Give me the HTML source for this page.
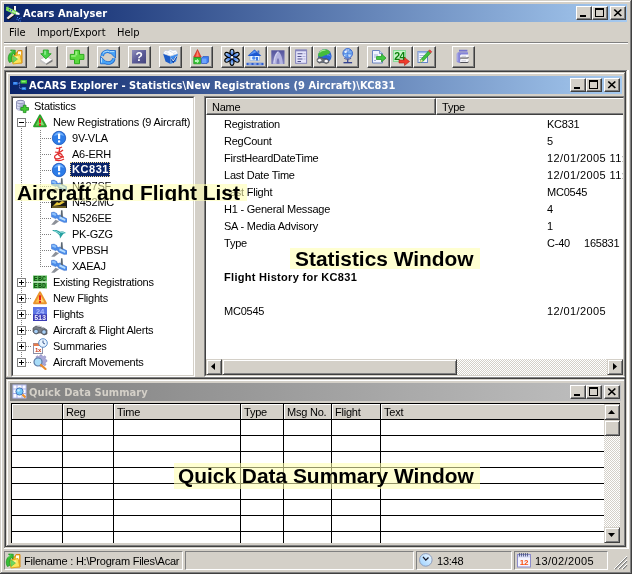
<!DOCTYPE html>
<html lang="en"><head><meta charset="utf-8"><title>Acars Analyser</title>
<style>
*{box-sizing:border-box;margin:0;padding:0}
html,body{width:632px;height:574px;overflow:hidden;background:#d4d0c8}
body{position:relative;font:11px "Liberation Sans",sans-serif;color:#000;letter-spacing:-0.23px}
#root{position:absolute;left:0;top:0;width:632px;height:574px;will-change:transform}
.a{position:absolute}
.ln{position:absolute;overflow:hidden}
.tb{position:absolute;height:18px;color:#fff;font:bold 11px "DejaVu Sans Condensed","DejaVu Sans","Liberation Sans",sans-serif;letter-spacing:.085px;line-height:18px;white-space:nowrap;overflow:hidden}
.tb.act{background:linear-gradient(90deg,#0a246a 0%,#a6caf0 100%)}
.tb.ina{background:linear-gradient(90deg,#808080 0%,#c0c0c0 100%);color:#d4d0c8}
.cb{position:absolute;width:16px;height:14px;background:#d4d0c8;border:1px solid;border-color:#fff #404040 #404040 #fff;box-shadow:inset -1px -1px 0 #808080}
.cb svg{position:absolute;left:0;top:0}
.menu{position:absolute;top:24px;height:18px;font:11px/18px "DejaVu Sans Condensed","DejaVu Sans","Liberation Sans",sans-serif;letter-spacing:0;white-space:nowrap}
.btn{position:absolute;top:46px;width:23px;height:22px;background:#d4d0c8;border:1px solid;border-color:#fff #404040 #404040 #fff;box-shadow:inset -1px -1px 0 #808080}
.btn svg{position:absolute;left:0;top:0}
.sunk{position:absolute;border:1px solid;border-color:#808080 #fff #fff #808080}
.sunk>.in{position:absolute;left:0;top:0;right:0;bottom:0;border:1px solid;border-color:#404040 #d4d0c8 #d4d0c8 #404040;background:#fff;overflow:hidden}
.tr{position:absolute;height:16px;line-height:16px;white-space:nowrap}
.lr{position:absolute;height:17px;line-height:17px;white-space:nowrap}
.dotv{position:absolute;width:1px;background-image:linear-gradient(#808080 50%,transparent 50%);background-size:1px 2px}
.doth{position:absolute;height:1px;background-image:linear-gradient(90deg,#808080 50%,transparent 50%);background-size:2px 1px}
.pm{position:absolute;width:9px;height:9px;border:1px solid #808080;background:#fff}
.pm:before{content:"";position:absolute;left:1px;top:3px;width:5px;height:1px;background:#000}
.pm.plus:after{content:"";position:absolute;left:3px;top:1px;width:1px;height:5px;background:#000}
.lab{position:absolute;font:bold 20.9px "Liberation Sans",sans-serif;letter-spacing:0;white-space:nowrap;overflow:hidden;background:rgba(255,255,175,0.58);color:#000}
.hd{position:absolute;background:#d4d0c8;border:1px solid;border-color:#fff #404040 #404040 #fff;box-shadow:inset -1px -1px 0 #808080;white-space:nowrap;overflow:hidden}
.sp{position:absolute;top:551px;height:19px;border:1px solid;border-color:#808080 #fff #fff #808080;line-height:17px;white-space:nowrap;overflow:hidden}
.gh{position:absolute;top:404px;height:15px;background:#d4d0c8;border-left:1px solid #fff;border-top:1px solid #fff;line-height:14px;white-space:nowrap;overflow:hidden}
.sbtn{position:absolute;background:#d4d0c8;border:1px solid;border-color:#d4d0c8 #404040 #404040 #d4d0c8;box-shadow:inset 1px 1px 0 #fff,inset -1px -1px 0 #808080}
.chk{background-image:repeating-conic-gradient(#fff 0% 25%,#d4d0c8 0% 50%);background-size:2px 2px}
</style></head>
<body><div id="root">
<div class="ln" style="left:1px;top:1px;width:630px;height:1px;background:#fff"></div>
<div class="ln" style="left:1px;top:1px;width:1px;height:572px;background:#fff"></div>
<div class="ln" style="left:630px;top:1px;width:1px;height:572px;background:#808080"></div>
<div class="ln" style="left:1px;top:572px;width:630px;height:1px;background:#808080"></div>
<div class="ln" style="left:631px;top:0px;width:1px;height:574px;background:#404040"></div>
<div class="ln" style="left:0px;top:573px;width:632px;height:1px;background:#404040"></div>
<div class="tb act" style="left:4px;top:4px;width:623px"><svg class="a" style="left:2px;top:2px" width="16" height="16" viewBox="0 0 16 16"><path d="M6 7l2.300 1.700-6 4.800-2-1.200z" fill="#101010" transform="translate(.6 .8)"/><path d="M6 7l2.300 1.700-6 4.500-1.800-1.200z" fill="#f4e4e0"/><path d="M7.800 0h2.200v5l-2.200-.8z" fill="#f8f8f8"/><path d="M7 0.500l.8-.5v4l-.8-.3z" fill="#101010"/><path d="M0 2.500l2-1.200 9.500 4.500.8 2.200-3 .5-9.300-4z" fill="#78e050"/><path d="M4 3.500l6 2.800-.5 1.200-6-2.800z" fill="#b8f0b0"/><circle cx="3.500" cy="3.700" r=".7" fill="#2040c0"/><circle cx="5.500" cy="4.700" r=".7" fill="#2040c0"/><path d="M10 6l3.500 1v2l-3.500-.5z" fill="#fff"/><path d="M0 1l1.500 1M2 0.500l-.5 1.500" stroke="#78e050" stroke-width="1"/><path d="M11 11h1v1h-1zM13 12h1v1h-1zM14.500 11.500h1v1h-1zM12 13.500h1v1h-1zM13.800 14.500h1v1h-1zM10.500 12.800h1v1h-1z" fill="#4a8cff"/></svg><span class="a" style="left:19px;top:1px">Acars Analyser</span></div>
<div class="cb" style="left:576px;top:6px"><svg width="14" height="12" viewBox="0 0 14 12"><rect x="3" y="8" width="6" height="2" fill="#000"/></svg></div>
<div class="cb" style="left:592px;top:6px"><svg width="14" height="12" viewBox="0 0 14 12"><rect x="2" y="1" width="8" height="8" fill="none" stroke="#000" stroke-width="1" transform="translate(.5 .5)"/><rect x="2" y="1" width="9" height="2" fill="#000"/></svg></div>
<div class="cb" style="left:610px;top:6px"><svg width="14" height="12" viewBox="0 0 14 12"><path d="M3.300 2 L10.300 8.500 M10.300 2 L3.300 8.500" stroke="#000" stroke-width="1.700" fill="none" transform="translate(0 .5)"/></svg></div>
<div class="menu" style="left:9px">File</div>
<div class="menu" style="left:37px">Import/Export</div>
<div class="menu" style="left:117px">Help</div>
<div class="ln" style="left:4px;top:42px;width:624px;height:1px;background:#808080"></div>
<div class="ln" style="left:4px;top:43px;width:624px;height:1px;background:#fff"></div>
<div class="btn" style="left:4px"><svg width="21" height="20" viewBox="0 0 21 20" ><path d="M9.500 6h2.500l1-2.500h4v12.500h-7.500z" fill="#f4c030" stroke="#d88810" stroke-width="1"/><path d="M13 4.500h3v6.500h-3z" fill="#fffdf0"/><path d="M6.500 9.500l8.500-2 1.800 8.300-8.800 1.200z" fill="#fbe45c" stroke="#e0a018" stroke-width=".9"/><path d="M8 10.500l5-1.200.5 2.500-4.500 1z" fill="#fff8b0" opacity=".8"/><path d="M4.500 15.500c-2.500-4-1-8.500 2.200-11l-1.200-1.500 4.800.3-.3 4.700-1.300-1.500c-2.200 1.800-3 4.800-1.800 7.800z" fill="#38c038" stroke="#189018" stroke-width=".7"/><path d="M5 6.500c.5-1 1.500-2 2.500-2.500" stroke="#a0f0a0" stroke-width=".8" fill="none"/><path d="M7.500 8.500l5 3.500-4.500 3.500z" fill="#70d860" stroke="#38b038" stroke-width=".5"/></svg></div>
<div class="btn" style="left:35px"><svg width="21" height="20" viewBox="0 0 21 20" ><path d="M4 12.500l6-3 6.500 3-6.300 4.300z" fill="#fff" stroke="#b8b8b8" stroke-width=".6"/><path d="M4 12.500v2l6.200 3.500v-1.200z" fill="#c4c4c4"/><path d="M16.500 12.500v2l-6.300 3.500v-1.200z" fill="#787878"/><path d="M7.300 3h5v3.700h2.900l-5.400 5.200-5-5.200h2.500z" fill="#48d048" stroke="#1ca01c" stroke-width=".8"/><path d="M8.300 3.800h1.500v4h-1.500z" fill="#98f098"/></svg></div>
<div class="btn" style="left:66px"><svg width="21" height="20" viewBox="0 0 21 20" ><path d="M7.500 3.300h5v4.100h4.400v5h-4.400v4.300h-5v-4.300h-4.200v-5h4.200z" fill="#5cd840" stroke="#2cac1c" stroke-width="1"/><path d="M8.300 4.200h2v4h-2zM4.200 8.300h4.500v1.500h-4.500z" fill="#98f080"/></svg></div>
<div class="btn" style="left:97px"><svg width="21" height="20" viewBox="0 0 21 20" ><g fill="none" stroke="#1c64c8" stroke-width="3.400"><path d="M4.200 9c.3-4 5-6.200 9-3.500"/><path d="M15.800 11.300c-.3 4-5 6.200-9 3.500"/></g><path d="M10 3.500h7.500v7.500z" fill="#48a4f8" stroke="#1c64c8" stroke-width=".8"/><path d="M10 16.800h-7.500v-7.500z" fill="#48a4f8" stroke="#1c64c8" stroke-width=".8"/><g fill="none" stroke="#48a4f8" stroke-width="2.000"><path d="M4.200 9c.3-4 5-6.200 9-3.500"/><path d="M15.800 11.300c-.3 4-5 6.200-9 3.500"/></g><path d="M5 6.300c1.500-2 4-2.600 6.500-1.600M12 4.600h4.300" stroke="#c0e8ff" stroke-width=".9" fill="none"/><path d="M3.500 11v4.500" stroke="#c0e8ff" stroke-width=".9" fill="none"/></svg></div>
<div class="btn" style="left:128px"><svg width="21" height="20" viewBox="0 0 21 20" ><defs><linearGradient id="hg" x1="0" y1="0" x2="1" y2="1"><stop offset="0" stop-color="#9090bc"/><stop offset=".5" stop-color="#5c5c98"/><stop offset="1" stop-color="#44447c"/></linearGradient></defs><rect x="3" y="3" width="14" height="13.500" fill="url(#hg)"/><text x="10" y="14.200" font-family="Liberation Sans,sans-serif" font-weight="bold" font-size="12" text-anchor="middle" fill="#fff">?</text></svg></div>
<div class="btn" style="left:159px"><svg width="21" height="20" viewBox="0 0 21 20" ><path d="M3 6.500l7.500 3v7.500l-5-2.500z" fill="#1c5cc8"/><path d="M18 6.500l-7.500 3v7.500l5.500-2.500z" fill="#3c8cf0"/><path d="M3 6.500l2-3 3 .5 2-1.500 3 1 3-.5 2 3.500-7.500 2.500z" fill="#fff" stroke="#b8c8e0" stroke-width=".6"/><path d="M5.500 5.500l3 1M9.500 4l3 1.500M13 6.500l2.500-1" stroke="#c8d4e8" stroke-width=".8"/><path d="M11.500 12l1.800 2.500 3-5" stroke="#103c98" stroke-width="1.800" fill="none"/><path d="M11.500 11.500l1.800 2.500 3-5" stroke="#e8f4ff" stroke-width=".9" fill="none"/></svg></div>
<div class="btn" style="left:190px"><svg width="21" height="20" viewBox="0 0 21 20" ><path d="M6.500 2.500l3.700 7.500c-2 1.200-5.500 1.200-7.500 0z" fill="#f04030" stroke="#b01c10" stroke-width=".5"/><path d="M6.500 3.500l1.500 6h-3z" fill="#ff9c80" opacity=".7"/><path d="M2.700 10.500h6.800v6.300h-6.800z" fill="#30c030" stroke="#189018" stroke-width=".6"/><path d="M4 14l2.500-2.500v1.500h2v2h-2v1.500z" fill="#d0ffd0" opacity=".85" transform="rotate(180 6.200 14)"/><path d="M10.500 11l1.500-1.500h5.500v5.500l-1.500 1.500h-5.500z" fill="#3c7cf0" stroke="#1c4cb8" stroke-width=".6"/><path d="M11 11.500h4.500v4.500h-4.500z" fill="#6ca4ff"/></svg></div>
<div class="btn" style="left:221px"><svg width="21" height="20" viewBox="0 0 21 20" ><defs><linearGradient id="pg" x1="0" y1="0" x2="0" y2="1"><stop offset="0" stop-color="#b8dcff"/><stop offset="1" stop-color="#2060e0"/></linearGradient></defs><g stroke="#000" stroke-width="1.100" fill="url(#pg)"><ellipse cx="10" cy="5.800" rx="2" ry="3.600"/><ellipse cx="10" cy="14.800" rx="2" ry="3.600" transform="rotate(180 10 14.800)"/><ellipse cx="10" cy="5.800" rx="2" ry="3.600" transform="rotate(60 10 10.300)"/><ellipse cx="10" cy="5.800" rx="2" ry="3.600" transform="rotate(120 10 10.300)"/><ellipse cx="10" cy="5.800" rx="2" ry="3.600" transform="rotate(240 10 10.300)"/><ellipse cx="10" cy="5.800" rx="2" ry="3.600" transform="rotate(300 10 10.300)"/></g><circle cx="10" cy="10.300" r="1.300" fill="#fff"/></svg></div>
<div class="btn" style="left:244px"><svg width="21" height="20" viewBox="0 0 21 20" ><path d="M5 8.500h9.500v5h-9.500z" fill="#e8f4ff" stroke="#8cb0e8" stroke-width=".6"/><path d="M2.700 8.800l6.800-6.300 6.800 6.300-1.300.3h-11z" fill="#1c58d0"/><path d="M4.500 8l5-4.500 2 1.800z" fill="#5c98f8"/><path d="M12.500 3.500h1.800v3l-1.800-1.500z" fill="#3c6cc8"/><circle cx="8.800" cy="11" r="1.800" fill="#4c8cf0"/><rect x="11" y="10" width="2" height="3.500" fill="#3c78e0"/><rect x="1.500" y="15.800" width="17" height="2.400" fill="#2c5cd0"/><path d="M3.500 17h3M8.500 17h3M13.500 17h3" stroke="#e8f0ff" stroke-width=".9"/></svg></div>
<div class="btn" style="left:267px"><svg width="21" height="20" viewBox="0 0 21 20" ><defs><linearGradient id="ag" x1="0" y1="0" x2="0" y2="1"><stop offset="0" stop-color="#54549c"/><stop offset="1" stop-color="#8484c0"/></linearGradient></defs><rect x="3.300" y="3.300" width="13.200" height="13.700" fill="url(#ag)"/><path d="M5 17c.5-6 2-11 5-13 3 2 4.500 7 5 13h-3.500c0-3-.5-5-1.500-6-1 1-1.500 3-1.500 6z" fill="#b4b4e0"/><path d="M6 16c.5-5 1.800-9 4-11" stroke="#d8d8f4" stroke-width="1" fill="none"/></svg></div>
<div class="btn" style="left:290px"><svg width="21" height="20" viewBox="0 0 21 20" ><rect x="4.600" y="3" width="11" height="13.300" fill="#e4e4fa" stroke="#8484bc" stroke-width="1"/><rect x="4.600" y="2.700" width="11" height="1.600" fill="#8484bc"/><path d="M6.500 6.700h5M6.500 9.500h4M6.500 12h5M6.500 14.500h3.500" stroke="#50508c" stroke-width="1.100"/><path d="M12.500 6.700h2M11.500 9.500h3M12.500 12h2" stroke="#b0b0d8" stroke-width="1"/></svg></div>
<div class="btn" style="left:313px"><svg width="21" height="20" viewBox="0 0 21 20" ><circle cx="10.800" cy="9" r="6.800" fill="#2c64d4"/><path d="M4.100 9c0-4 3-6.800 6.700-6.800 2.500 0 4.300 1.200 5.500 3-1 2.200-3 2.500-5 3-2.500.6-3.500 2.800-7.200 .8z" fill="#44bc3c"/><path d="M5.500 5.500c1.800-2 4-2.600 6-2.200" stroke="#a8ec98" stroke-width="1.100" fill="none"/><path d="M13 8c1.500-.5 3 .2 4 1.500" stroke="#6c9cf0" stroke-width="1" fill="none"/><path d="M3 12.200l2.200-2 2.800.6 1.500 1 2.800-.4 2.500 1.800v2.300l-2.500 1.200-2.800-1.300h-1.500l-2.800.8-2.200-1.800z" fill="#70747c" stroke="#3c4048" stroke-width=".5"/><ellipse cx="5.600" cy="13.300" rx="2.200" ry="1.700" fill="#fcfcff" stroke="#3c4048" stroke-width=".5"/><ellipse cx="12.200" cy="14.100" rx="2.200" ry="1.700" fill="#fcfcff" stroke="#3c4048" stroke-width=".5"/></svg></div>
<div class="btn" style="left:336px"><svg width="21" height="20" viewBox="0 0 21 20" ><circle cx="10.700" cy="6.400" r="4.800" fill="#78b0f4" stroke="#3c68d0" stroke-width="1"/><path d="M7.500 4.200c1-1.500 3-2 4.500-1.500 0 1.500-1.500 2-2.500 2.500-.5 1.500-2 1-2-1zM11 8c1-.5 2.500 0 3 1-1 1.500-2.500 1.500-3-1zM7 8l1.500.5-.5 1.500z" fill="#f0f8ff"/><path d="M6 6.400h9.500M10.700 1.600v9.600M7.300 3.200c2 1 5 1 6.800 0M7.300 9.600c2-1 5-1 6.800 0" stroke="#3c68d0" stroke-width=".45" fill="none"/><path d="M7.200 11.300c2 1.300 5 1.300 7 0" stroke="#3c4c9c" stroke-width=".9" fill="none"/><path d="M10.700 12.200v3" stroke="#3c4c9c" stroke-width="1.300"/><path d="M6.500 15.700h8.600" stroke="#2c3c8c" stroke-width="1.300"/></svg></div>
<div class="btn" style="left:367px"><svg width="21" height="20" viewBox="0 0 21 20" ><path d="M4.500 3.500h7l3 3v9.500h-10z" fill="#f0f4ff" stroke="#6c84c0"/><path d="M11.500 3.500v3h3" fill="#d0dcf4" stroke="#6c84c0" stroke-width=".8"/><path d="M6 8h4M6 10h2M6 13.500h2" stroke="#a0b0d8"/><path d="M8.500 9.500h5v-2.500l4.500 4-4.500 4v-2.500h-5z" fill="#40c840" stroke="#1c901c" stroke-width=".7"/></svg></div>
<div class="btn" style="left:390px"><svg width="21" height="20" viewBox="0 0 21 20" ><rect x="2.500" y="3.500" width="12" height="11" fill="#c8f4c8" stroke="#88dc98" stroke-width="1"/><text x="8.500" y="13" font-family="Liberation Sans,sans-serif" font-weight="bold" font-size="10.500" text-anchor="middle" fill="#0c800c" letter-spacing="-.5">24</text><path d="M8 13h5.500v-2.500l5 4-5 4v-2.500h-5.500z" fill="#f03c2c" stroke="#b01c10" stroke-width=".6"/></svg></div>
<div class="btn" style="left:413px"><svg width="21" height="20" viewBox="0 0 21 20" ><rect x="4" y="4.500" width="9.500" height="11" fill="#f4f8ff" stroke="#6484c8"/><rect x="4" y="4.500" width="9.500" height="1.800" fill="#a0b8ec"/><path d="M5.500 8.500h6M5.500 10.500h5M5.500 12.500h3" stroke="#a8b8dc"/><path d="M14.500 4l2.200 2-7.500 8.200-3.200 1.300 1-3.300z" fill="#40c040" stroke="#1c8c1c" stroke-width=".6"/><path d="M14.500 4l1.200-1.200 2.200 2-1.200 1.200z" fill="#f04040" stroke="#b02020" stroke-width=".4"/><path d="M7 12.200l2.200 2-3.200 1.300z" fill="#f8e0a8"/></svg></div>
<div class="btn" style="left:452px"><svg width="21" height="20" viewBox="0 0 21 20" ><rect x="6" y="2.800" width="8.400" height="1.800" fill="#7474d0"/><path d="M3.800 6.500l1.500-1.200h9.700v3h-7.600v8l-3.600-1.300z" fill="#8484d8"/><path d="M3.800 6.500l1.500-1.200v9.500l-1.500-.5z" fill="#a4a4e8"/><path d="M7.200 8.200l1-0.600h7.300v2.600l-1.300.9h-7z" fill="#f8f8fc"/><path d="M7.200 10.600h7.200l1.200-.9v1l-1.200.9h-7.200z" fill="#505058"/><path d="M7.200 12.700l1-0.600h7.300v2.600l-1.300.9h-7z" fill="#f8f8fc"/><path d="M7.200 15.100h7.200l1.200-.9v1l-1.200.9h-7.200z" fill="#505058"/><path d="M8.500 9.300h4.500M8.500 13.800h4.500" stroke="#c0c0cc" stroke-width=".8"/></svg></div>
<div class="ln" style="left:4px;top:70px;width:624px;height:1px;background:#808080"></div>
<div class="ln" style="left:4px;top:70px;width:1px;height:478px;background:#808080"></div>
<div class="ln" style="left:5px;top:71px;width:622px;height:1px;background:#404040"></div>
<div class="ln" style="left:5px;top:71px;width:1px;height:476px;background:#404040"></div>
<div class="ln" style="left:626px;top:71px;width:1px;height:477px;background:#d4d0c8"></div>
<div class="ln" style="left:627px;top:70px;width:2px;height:479px;background:#fff"></div>
<div class="ln" style="left:5px;top:547px;width:622px;height:1px;background:#d4d0c8"></div>
<div class="ln" style="left:4px;top:548px;width:624px;height:1px;background:#fff"></div>
<div class="ln" style="left:7px;top:73px;width:617px;height:1px;background:#fff"></div>
<div class="ln" style="left:7px;top:73px;width:1px;height:303px;background:#fff"></div>
<div class="ln" style="left:624px;top:73px;width:1px;height:473px;background:#808080"></div>
<div class="ln" style="left:625px;top:72px;width:1px;height:475px;background:#404040"></div>
<div class="ln" style="left:6px;top:377px;width:619px;height:1px;background:#808080"></div>
<div class="ln" style="left:6px;top:378px;width:620px;height:1px;background:#404040"></div>
<div class="ln" style="left:7px;top:380px;width:617px;height:1px;background:#fff"></div>
<div class="ln" style="left:7px;top:380px;width:1px;height:165px;background:#fff"></div>
<div class="ln" style="left:7px;top:545px;width:618px;height:1px;background:#808080"></div>
<div class="ln" style="left:6px;top:546px;width:620px;height:1px;background:#404040"></div>
<div class="tb act" style="left:10px;top:76px;width:612px"><svg class="a" style="left:3px;top:1px" width="16" height="16" viewBox="0 0 16 16"><path d="M4.600 6.300h2v-1.500h1M6.600 6.300v5.200h2" stroke="#6c84d0" stroke-width="1" stroke-dasharray="1 1" fill="none"/><rect x="0" y="5" width="4.600" height="2.800" fill="#2c7ce8"/><rect x="1" y="5.500" width="2.500" height="1" fill="#70b0ff"/><rect x="7.600" y="3" width="6.400" height="3.600" fill="#38c038"/><rect x="8.600" y="3.800" width="4" height="1.500" fill="#90f070"/><rect x="8.700" y="10.300" width="4.400" height="2.600" fill="#2c8cf0"/><rect x="9.500" y="10.800" width="2.500" height="1" fill="#70c0ff"/></svg><span class="a" style="left:19px;top:1px">ACARS Explorer - Statistics\New Registrations (9 Aircraft)\KC831</span></div>
<div class="cb" style="left:570px;top:78px"><svg width="14" height="12" viewBox="0 0 14 12"><rect x="3" y="8" width="6" height="2" fill="#000"/></svg></div>
<div class="cb" style="left:586px;top:78px"><svg width="14" height="12" viewBox="0 0 14 12"><rect x="2" y="1" width="8" height="8" fill="none" stroke="#000" stroke-width="1" transform="translate(.5 .5)"/><rect x="2" y="1" width="9" height="2" fill="#000"/></svg></div>
<div class="cb" style="left:604px;top:78px"><svg width="14" height="12" viewBox="0 0 14 12"><path d="M3.300 2 L10.300 8.500 M10.300 2 L3.300 8.500" stroke="#000" stroke-width="1.700" fill="none" transform="translate(0 .5)"/></svg></div>
<div class="sunk" style="left:11px;top:96px;width:184px;height:281px"><div class="in">
<div class="dotv" style="left:8px;top:30px;height:234px"></div>
<div class="dotv" style="left:27px;top:32px;height:136px"></div>
<div class="doth" style="left:27px;top:40px;width:11px"></div>
<div class="doth" style="left:27px;top:56px;width:11px"></div>
<div class="doth" style="left:27px;top:72px;width:11px"></div>
<div class="doth" style="left:27px;top:88px;width:11px"></div>
<div class="doth" style="left:27px;top:104px;width:11px"></div>
<div class="doth" style="left:27px;top:120px;width:11px"></div>
<div class="doth" style="left:27px;top:136px;width:11px"></div>
<div class="doth" style="left:27px;top:152px;width:11px"></div>
<div class="doth" style="left:27px;top:168px;width:11px"></div>
<div class="doth" style="left:13px;top:184px;width:6px"></div>
<div class="doth" style="left:13px;top:200px;width:6px"></div>
<div class="doth" style="left:13px;top:216px;width:6px"></div>
<div class="doth" style="left:13px;top:232px;width:6px"></div>
<div class="doth" style="left:13px;top:248px;width:6px"></div>
<div class="doth" style="left:13px;top:264px;width:6px"></div>
<div class="doth" style="left:13px;top:24px;width:6px"></div>
<svg class="a" style="left:1px;top:0px" width="16" height="16" viewBox="0 0 16 16"><path d="M2.500 4c0-2.200 8-2.200 8 0v6.500c0 2.200-8 2.200-8 0z" fill="#b4b8d8" stroke="#7074a0" stroke-width=".7"/><path d="M3 4.500c0 1.500 2 1.800 2.500 1.800v6c-1.500 0-2.500-.8-2.500-1.800z" fill="#e4e8fc" opacity=".8"/><ellipse cx="6.500" cy="4" rx="4" ry="1.500" fill="#dcdff4" stroke="#7074a0" stroke-width=".6"/><path d="M2.500 7c0 2 8 2 8 0M2.500 9.500c0 2 8 2 8 0" fill="none" stroke="#8c90b8" stroke-width=".6"/><path d="M9.300 8.800h2.700v-0h0v2.300h2.500v2.700h-2.500v2.400h-2.700v-2.400h-2.500v-2.700h2.500z" fill="#44cc34" stroke="#1c8c1c" stroke-width=".8" transform="translate(0 -1.600)"/></svg>
<div class="tr" style="left:21px;top:0px;">Statistics</div>
<div class="pm" style="left:4px;top:20px"></div>
<svg class="a" style="left:19px;top:15px" width="16" height="16" viewBox="0 0 16 16"><path d="M8 2.300l6 11h-12z" fill="#64d050" stroke="#2ca02c" stroke-width="1.800" stroke-linejoin="round"/><path d="M8 4.500l3.800 7.500h-3.800z" fill="#98e888" opacity=".6"/><rect x="7" y="5.300" width="2" height="4.700" fill="#e81c1c"/><rect x="7" y="10.800" width="2" height="2" fill="#e81c1c"/></svg>
<div class="tr" style="left:40px;top:16px;letter-spacing:-.19px">New Registrations (9 Aircraft)</div>
<svg class="a" style="left:38px;top:32px" width="16" height="16" viewBox="0 0 16 16"><circle cx="8" cy="8" r="6.700" fill="#2c7ce8" stroke="#1c54b8" stroke-width=".8"/><path d="M3 6c1-3 4-4 5-4s4 1 5 4c-3-1.500-7-1.500-10 0z" fill="#7cb8ff" opacity=".8"/><rect x="7" y="3.500" width="2.200" height="5.500" rx=".6" fill="#fff"/><rect x="7" y="10.300" width="2.200" height="2.200" rx=".6" fill="#fff"/></svg>
<div class="tr" style="left:59px;top:32px;">9V-VLA</div>
<svg class="a" style="left:38px;top:48px" width="16" height="16" viewBox="0 0 16 16"><g fill="none" stroke="#e02c2c" stroke-width="1.300"><path d="M5 2c2 1 4 0 6-1M9 1l-1 5M4 6c3 1 6 0 8-2M5 9c2-2 5-2 6 0s-2 4-5 4-3-3-1-4zM7 8c1 2 3 3 6 3M4 14c3 1 6 1 9-1"/></g></svg>
<div class="tr" style="left:59px;top:48px;">A6-ERH</div>
<svg class="a" style="left:38px;top:64px" width="16" height="16" viewBox="0 0 16 16"><circle cx="8" cy="8" r="6.700" fill="#2c7ce8" stroke="#1c54b8" stroke-width=".8"/><path d="M3 6c1-3 4-4 5-4s4 1 5 4c-3-1.500-7-1.500-10 0z" fill="#7cb8ff" opacity=".8"/><rect x="7" y="3.500" width="2.200" height="5.500" rx=".6" fill="#fff"/><rect x="7" y="10.300" width="2.200" height="2.200" rx=".6" fill="#fff"/></svg>
<div class="tr" style="left:57px;top:64px;width:40px;height:15px;line-height:15px;background:#0a246a;color:#fff;font-weight:bold;padding-left:2px;letter-spacing:.55px;outline:1px dotted #f5db95;outline-offset:-1px">KC831</div>
<svg class="a" style="left:38px;top:80px" width="16" height="16" viewBox="0 0 16 16"><path d="M4.500 9.800l3.500 1.500-4.500 3.500h-3.300z" fill="#8c9098"/><path d="M0.300 2.600l2.700-.6 3 1.600-.2 1 2.200 1 .6-.8 7.400 4 .2 3.400-3 .4-6-2.700.2-1-2-.9-.6.800-4.500-2z" fill="#4c8ce8" stroke="#3c6cc8" stroke-width=".4"/><path d="M1 3.200l2-.4 2.200 1.200-.6 2-3.600-1.600z" fill="#8cc0fc"/><path d="M8.800 6.200l5.700 3-.5 1.800-5.800-2.600z" fill="#b4dcff"/><path d="M10 0.300h1.500l.5 7.200-2.300-1.100z" fill="#5c6874"/></svg>
<div class="tr" style="left:59px;top:80px;">N127SF</div>
<svg class="a" style="left:38px;top:96px" width="16" height="16" viewBox="0 0 16 16"><rect x="0" y="6" width="16" height="8" fill="#181818"/><path d="M2 12l4-4 2 1 3-2 3 1-5 3z" fill="#e8c83c"/><path d="M1 13h14" stroke="#e8c83c" stroke-width=".8"/></svg>
<div class="tr" style="left:59px;top:96px;">N452MC</div>
<svg class="a" style="left:38px;top:112px" width="16" height="16" viewBox="0 0 16 16"><path d="M4.500 9.800l3.500 1.500-4.500 3.500h-3.300z" fill="#8c9098"/><path d="M0.300 2.600l2.700-.6 3 1.600-.2 1 2.200 1 .6-.8 7.400 4 .2 3.400-3 .4-6-2.700.2-1-2-.9-.6.800-4.500-2z" fill="#4c8ce8" stroke="#3c6cc8" stroke-width=".4"/><path d="M1 3.200l2-.4 2.200 1.200-.6 2-3.600-1.600z" fill="#8cc0fc"/><path d="M8.800 6.200l5.700 3-.5 1.800-5.800-2.600z" fill="#b4dcff"/><path d="M10 0.300h1.500l.5 7.200-2.300-1.100z" fill="#5c6874"/></svg>
<div class="tr" style="left:59px;top:112px;">N526EE</div>
<svg class="a" style="left:38px;top:128px" width="16" height="16" viewBox="0 0 16 16"><path d="M1 4.500c3-.8 5.500-.5 8 1.200 2.500-.6 4.500-.2 6 1.300-1.500.2-2.800.8-3.500 2l-2.500 3.500-.3-2.800c-1.800-2.500-4.500-4-7.700-5.200z" fill="#28a0a0"/><path d="M3 5c2.500.3 4.500 1.500 6 3M9.500 6.500c1.500-.3 3 0 4 .6" stroke="#a0e8e8" stroke-width=".9" fill="none"/></svg>
<div class="tr" style="left:59px;top:128px;">PK-GZG</div>
<svg class="a" style="left:38px;top:144px" width="16" height="16" viewBox="0 0 16 16"><path d="M4.500 9.800l3.500 1.500-4.500 3.500h-3.300z" fill="#8c9098"/><path d="M0.300 2.600l2.700-.6 3 1.600-.2 1 2.200 1 .6-.8 7.400 4 .2 3.400-3 .4-6-2.700.2-1-2-.9-.6.800-4.500-2z" fill="#4c8ce8" stroke="#3c6cc8" stroke-width=".4"/><path d="M1 3.200l2-.4 2.200 1.200-.6 2-3.600-1.600z" fill="#8cc0fc"/><path d="M8.800 6.200l5.700 3-.5 1.800-5.800-2.600z" fill="#b4dcff"/><path d="M10 0.300h1.500l.5 7.200-2.300-1.100z" fill="#5c6874"/></svg>
<div class="tr" style="left:59px;top:144px;">VPBSH</div>
<svg class="a" style="left:38px;top:160px" width="16" height="16" viewBox="0 0 16 16"><path d="M4.500 9.800l3.500 1.500-4.500 3.500h-3.300z" fill="#8c9098"/><path d="M0.300 2.600l2.700-.6 3 1.600-.2 1 2.200 1 .6-.8 7.400 4 .2 3.400-3 .4-6-2.700.2-1-2-.9-.6.800-4.500-2z" fill="#4c8ce8" stroke="#3c6cc8" stroke-width=".4"/><path d="M1 3.200l2-.4 2.200 1.200-.6 2-3.600-1.600z" fill="#8cc0fc"/><path d="M8.800 6.200l5.700 3-.5 1.800-5.800-2.600z" fill="#b4dcff"/><path d="M10 0.300h1.500l.5 7.200-2.300-1.100z" fill="#5c6874"/></svg>
<div class="tr" style="left:59px;top:160px;">XAEAJ</div>
<div class="pm plus" style="left:4px;top:180px"></div>
<svg class="a" style="left:19px;top:176px" width="16" height="16" viewBox="0 0 16 16"><rect x="1" y="1.500" width="14" height="6" fill="#5cbc5c"/><rect x="1" y="8.500" width="14" height="6" fill="#5cbc5c"/><text x="8" y="6.800" font-family="Liberation Mono,monospace" font-weight="bold" font-size="6.500" text-anchor="middle" fill="#0c4c0c" letter-spacing=".3">EBC</text><text x="8" y="13.800" font-family="Liberation Mono,monospace" font-weight="bold" font-size="6.500" text-anchor="middle" fill="#0c4c0c" letter-spacing=".3">EBD</text></svg>
<div class="tr" style="left:40px;top:176px;">Existing Registrations</div>
<div class="pm plus" style="left:4px;top:196px"></div>
<svg class="a" style="left:19px;top:192px" width="16" height="16" viewBox="0 0 16 16"><path d="M8 2.300l6 11h-12z" fill="#fcc04c" stroke="#e8942c" stroke-width="1.800" stroke-linejoin="round"/><path d="M8 4.500l3.800 7.500h-3.800z" fill="#ffe08c" opacity=".6"/><rect x="7" y="5.300" width="2" height="4.700" fill="#e81c1c"/><rect x="7" y="10.800" width="2" height="2" fill="#e81c1c"/></svg>
<div class="tr" style="left:40px;top:192px;">New Flights</div>
<div class="pm plus" style="left:4px;top:212px"></div>
<svg class="a" style="left:19px;top:208px" width="16" height="16" viewBox="0 0 16 16"><rect x="1" y="1" width="14" height="14" fill="#5c74e4"/><text x="8" y="7.500" font-family="Liberation Mono,monospace" font-weight="bold" font-size="7.500" text-anchor="middle" fill="#a8b8ff">24</text><rect x="1" y="8.300" width="14" height="6.700" fill="#3c3cb4"/><text x="8" y="14.300" font-family="Liberation Mono,monospace" font-weight="bold" font-size="6.800" text-anchor="middle" fill="#f0f0ff">513</text></svg>
<div class="tr" style="left:40px;top:208px;">Flights</div>
<div class="pm plus" style="left:4px;top:228px"></div>
<svg class="a" style="left:19px;top:224px" width="16" height="16" viewBox="0 0 16 16"><path d="M1 6l3-2 3 1 2 0 3 1 3 2v4l-3 1-3-2-2 0-3 1-3-2z" fill="#787c84" stroke="#3c4048" stroke-width=".6"/><circle cx="4" cy="9.500" r="2.300" fill="#a8d0f8" stroke="#3c4048" stroke-width=".7"/><circle cx="12" cy="10" r="2.300" fill="#a8d0f8" stroke="#3c4048" stroke-width=".7"/><path d="M5 4l3 0M9 5l3 1" stroke="#b8bcc4" stroke-width="1"/></svg>
<div class="tr" style="left:40px;top:224px;">Aircraft &amp; Flight Alerts</div>
<div class="pm plus" style="left:4px;top:244px"></div>
<svg class="a" style="left:19px;top:240px" width="16" height="16" viewBox="0 0 16 16"><rect x="1.500" y="5.500" width="9" height="10" fill="#fff" stroke="#8c90a8"/><rect x="1.500" y="5.500" width="9" height="2.500" fill="#e87c4c"/><text x="6" y="14" font-family="Liberation Sans,sans-serif" font-weight="bold" font-size="6" text-anchor="middle" fill="#c83c1c">1x</text><circle cx="11" cy="5" r="4.300" fill="#e8f4ff" stroke="#5c8cc8" stroke-width="1"/><path d="M11 2.500V5l2 1" stroke="#2c4c88" stroke-width=".9" fill="none"/></svg>
<div class="tr" style="left:40px;top:240px;">Summaries</div>
<div class="pm plus" style="left:4px;top:260px"></div>
<svg class="a" style="left:19px;top:256px" width="16" height="16" viewBox="0 0 16 16"><path d="M6 1l2 0 .5 1.500 1.500.5 1.500-1 1.500 1.500-1 1.500.5 1.500 1.500.5v2l-1.500.5-.5 1.500 1 1.500-1.500 1.500-1.500-1-1.500.5-.5 1.500h-2l-.5-1.500-1.500-.5-1.500 1-1.500-1.500 1-1.500-.5-1.500L0 9V7l1.500-.5.5-1.500-1-1.500L2.500 2 4 3l1.500-.5z" fill="#a8a8d8" stroke="#7878b0" stroke-width=".5" transform="translate(3 0) scale(.85)"/><circle cx="6" cy="8" r="4" fill="#a8dcf8" stroke="#5c7ca8" stroke-width="1.200"/><path d="M9 11l4.500 4" stroke="#e88c2c" stroke-width="2.200" stroke-linecap="round"/></svg>
<div class="tr" style="left:40px;top:256px;">Aircraft Movements</div>
</div></div>
<div class="sunk" style="left:204px;top:96px;width:421px;height:281px;border-right-color:#808080"><div class="in">
<div class="hd" style="left:0;top:0;width:230px;height:17px;line-height:15px;padding:1px 0 0 5px">Name</div>
<div class="hd" style="left:230px;top:0;width:200px;height:17px;line-height:15px;padding:1px 0 0 5px">Type</div>
<div class="lr" style="left:18px;top:18px">Registration</div>
<div class="lr" style="left:341px;top:18px">KC831</div>
<div class="lr" style="left:18px;top:35px">RegCount</div>
<div class="lr" style="left:341px;top:35px">5</div>
<div class="lr" style="left:18px;top:52px">FirstHeardDateTime</div>
<div class="lr" style="left:341px;top:52px"><span style="letter-spacing:.4px">12/01/2005 11:</span></div>
<div class="lr" style="left:18px;top:69px">Last Date Time</div>
<div class="lr" style="left:341px;top:69px"><span style="letter-spacing:.4px">12/01/2005 11:</span></div>
<div class="lr" style="left:18px;top:86px">Last Flight</div>
<div class="lr" style="left:341px;top:86px">MC0545</div>
<div class="lr" style="left:18px;top:103px">H1 - General Message</div>
<div class="lr" style="left:341px;top:103px">4</div>
<div class="lr" style="left:18px;top:120px">SA - Media Advisory</div>
<div class="lr" style="left:341px;top:120px">1</div>
<div class="lr" style="left:18px;top:137px">Type</div>
<div class="lr" style="left:341px;top:137px">C-40&nbsp;&nbsp;&nbsp;&nbsp;&nbsp;165831</div>
<div class="lr" style="left:18px;top:171px"><b style="letter-spacing:.3px">Flight History for KC831</b></div>
<div class="lr" style="left:18px;top:205px">MC0545</div>
<div class="lr" style="left:341px;top:205px"><span style="letter-spacing:.4px">12/01/2005</span></div>
<div class="a chk" style="left:0;top:261px;width:417px;height:16px"></div>
<div class="sbtn" style="left:0;top:261px;width:16px;height:16px"><svg width="14" height="14" viewBox="0 0 14 14"><path d="M8 3v7L4 6.500z" fill="#000"/></svg></div>
<div class="sbtn" style="left:16px;top:261px;width:235px;height:16px"></div>
<div class="sbtn" style="left:401px;top:261px;width:16px;height:16px"><svg width="14" height="14" viewBox="0 0 14 14"><path d="M5 3v7l4-3.500z" fill="#000"/></svg></div>
</div></div>
<div class="tb ina" style="left:10px;top:383px;width:611px"><svg class="a" style="left:2px;top:1px" width="16" height="16" viewBox="0 0 16 16"><rect x="1" y="1" width="13" height="13" fill="#fbfbff" stroke="#b4bcf0"/><path d="M1 5h13M1 9.500h13M5 1v13M10 1v13" stroke="#a8b0ec" stroke-width="1"/><circle cx="7.500" cy="7.500" r="3.600" fill="#70c8f8" stroke="#4878b8"/><circle cx="6.500" cy="6.500" r="1.300" fill="#c8ecff"/><path d="M10.500 10.500l3 3" stroke="#f09028" stroke-width="2.200"/></svg><span class="a" style="left:19px;top:1px">Quick Data Summary</span></div>
<div class="cb" style="left:570px;top:385px"><svg width="14" height="12" viewBox="0 0 14 12"><rect x="3" y="8" width="6" height="2" fill="#000"/></svg></div>
<div class="cb" style="left:586px;top:385px"><svg width="14" height="12" viewBox="0 0 14 12"><rect x="2" y="1" width="8" height="8" fill="none" stroke="#000" stroke-width="1" transform="translate(.5 .5)"/><rect x="2" y="1" width="9" height="2" fill="#000"/></svg></div>
<div class="cb" style="left:604px;top:385px"><svg width="14" height="12" viewBox="0 0 14 12"><path d="M3.300 2 L10.300 8.500 M10.300 2 L3.300 8.500" stroke="#000" stroke-width="1.700" fill="none" transform="translate(0 .5)"/></svg></div>
<div class="a" style="left:11px;top:403px;width:609px;height:140px;background:#fff;overflow:hidden;border-left:1px solid #000;border-top:1px solid #000">
<div class="gh" style="left:0px;top:0;width:50px;padding-left:2px"></div>
<div class="gh" style="left:51px;top:0;width:50px;padding-left:2px">Reg</div>
<div class="gh" style="left:102px;top:0;width:126px;padding-left:2px">Time</div>
<div class="gh" style="left:229px;top:0;width:42px;padding-left:2px">Type</div>
<div class="gh" style="left:272px;top:0;width:47px;padding-left:2px">Msg No.</div>
<div class="gh" style="left:320px;top:0;width:48px;padding-left:2px">Flight</div>
<div class="gh" style="left:369px;top:0;width:223px;padding-left:2px">Text</div>
<div class="ln" style="left:50px;top:0;width:1px;height:139px;background:#000"></div>
<div class="ln" style="left:101px;top:0;width:1px;height:139px;background:#000"></div>
<div class="ln" style="left:228px;top:0;width:1px;height:139px;background:#000"></div>
<div class="ln" style="left:271px;top:0;width:1px;height:139px;background:#000"></div>
<div class="ln" style="left:319px;top:0;width:1px;height:139px;background:#000"></div>
<div class="ln" style="left:368px;top:0;width:1px;height:139px;background:#000"></div>
<div class="ln" style="left:0;top:15px;width:592px;height:1px;background:#000"></div>
<div class="ln" style="left:0;top:31px;width:592px;height:1px;background:#000"></div>
<div class="ln" style="left:0;top:47px;width:592px;height:1px;background:#000"></div>
<div class="ln" style="left:0;top:63px;width:592px;height:1px;background:#000"></div>
<div class="ln" style="left:0;top:79px;width:592px;height:1px;background:#000"></div>
<div class="ln" style="left:0;top:95px;width:592px;height:1px;background:#000"></div>
<div class="ln" style="left:0;top:111px;width:592px;height:1px;background:#000"></div>
<div class="ln" style="left:0;top:127px;width:592px;height:1px;background:#000"></div>
<div class="a chk" style="left:592px;top:0;width:16px;height:139px"></div>
<div class="sbtn" style="left:592px;top:0;width:16px;height:16px"><svg width="14" height="14" viewBox="0 0 14 14"><path d="M3 9h7L6.500 5z" fill="#000"/></svg></div>
<div class="sbtn" style="left:592px;top:16px;width:16px;height:16px"></div>
<div class="sbtn" style="left:592px;top:123px;width:16px;height:16px"><svg width="14" height="14" viewBox="0 0 14 14"><path d="M3 5h7L6.500 9z" fill="#000"/></svg></div>
</div>
<div class="sp" style="left:4px;width:179px"><svg class="a" style="left:-2px;top:-1px" width="21" height="20" viewBox="0 0 21 20"><path d="M9.500 6h2.500l1-2.500h4v12.500h-7.500z" fill="#f4c030" stroke="#d88810" stroke-width="1"/><path d="M13 4.500h3v6.500h-3z" fill="#fffdf0"/><path d="M6.500 9.500l8.500-2 1.800 8.300-8.800 1.200z" fill="#fbe45c" stroke="#e0a018" stroke-width=".9"/><path d="M8 10.500l5-1.200.5 2.500-4.500 1z" fill="#fff8b0" opacity=".8"/><path d="M4.500 15.500c-2.500-4-1-8.500 2.200-11l-1.200-1.500 4.800.3-.3 4.700-1.300-1.500c-2.200 1.800-3 4.800-1.800 7.800z" fill="#38c038" stroke="#189018" stroke-width=".7"/><path d="M5 6.500c.5-1 1.500-2 2.500-2.500" stroke="#a0f0a0" stroke-width=".8" fill="none"/><path d="M7.500 8.500l5 3.500-4.500 3.500z" fill="#70d860" stroke="#38b038" stroke-width=".5"/></svg><span class="a" style="left:19px;top:1px">Filename : H:\Program Files\Acar</span></div>
<div class="sp" style="left:185px;width:229px"></div>
<div class="sp" style="left:416px;width:96px"><svg class="a" style="left:2px;top:1px" width="16" height="16" viewBox="0 0 16 16"><defs><linearGradient id="ck" x1="0" y1="1" x2="1" y2="0"><stop offset="0" stop-color="#98d0ff"/><stop offset="1" stop-color="#f0f8ff"/></linearGradient></defs><circle cx="6.800" cy="6.900" r="6.300" fill="url(#ck)" stroke="#8c9cbc" stroke-width="1"/><path d="M4 3.800l2.800 3.300 2.700-2.600" stroke="#181828" stroke-width="1.300" fill="none"/></svg><span class="a" style="left:20px;top:1px">13:48</span></div>
<div class="sp" style="left:514px;width:94px"><svg class="a" style="left:1px;top:0" width="16" height="16" viewBox="0 0 16 16"><rect x="1.500" y="2.500" width="13" height="12.500" fill="#f4f4ff" stroke="#8c8ccc"/><rect x="2" y="3" width="12" height="2.500" fill="#d4d8f4"/><path d="M3.500 1v3.500M5.500 1v3.500M7.500 1v3.500M9.500 1v3.500M11.500 1v3.500" stroke="#505c80" stroke-width=".9"/><text x="8" y="12.800" font-family="Liberation Sans,sans-serif" font-weight="bold" font-size="8" text-anchor="middle" fill="#f84c0c">12</text></svg><span class="a" style="left:20px;top:1px;letter-spacing:.4px">13/02/2005</span></div>
<svg class="a" style="left:612px;top:554px" width="16" height="16" viewBox="0 0 16 16"><path d="M15 3L3 15M15 7L7 15M15 11L11 15" stroke="#808080" stroke-width="1.400"/><path d="M15 2L2 15M15 6L6 15M15 10L10 15" stroke="#fff" stroke-width="1"/></svg>
<div class="lab" style="left:15px;top:184px;width:232px;height:17px;line-height:17px;padding-left:2px">Aircraft and Flight List</div>
<div class="lab" style="left:290px;top:248px;width:190px;height:21px;line-height:21px;padding-left:5px">Statistics Window</div>
<div class="lab" style="left:174px;top:463px;width:306px;height:26px;line-height:25px;padding-left:4px">Quick Data Summary Window</div>
</div></body></html>
